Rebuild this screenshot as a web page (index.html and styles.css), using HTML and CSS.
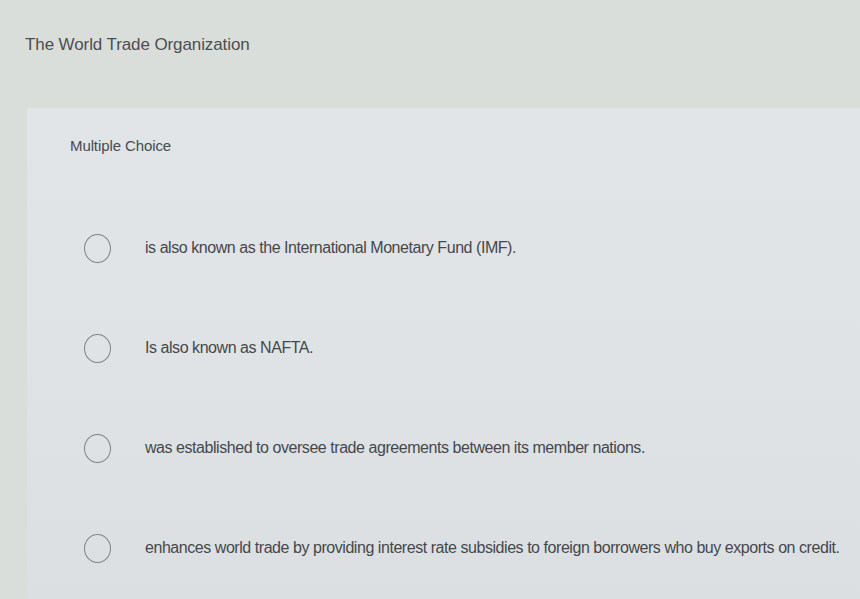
FILE: index.html
```html
<!DOCTYPE html>
<html lang="en">
<head>
    <meta charset="UTF-8">
    <meta name="viewport" content="width=device-width, initial-scale=1.0">
    <title>The World Trade Organization</title>
    <link rel="stylesheet" href="styles.css">
</head>
<body>
    <div class="header">
        <div class="question">The World Trade Organization</div>
    </div>
    <div class="panel">
        <div class="kind">Multiple Choice</div>
        <div class="options">
            <label class="option">
                <span class="radio"></span>
                <span class="answer">is also known as the International Monetary Fund (IMF).</span>
            </label>
            <label class="option">
                <span class="radio"></span>
                <span class="answer">Is also known as NAFTA.</span>
            </label>
            <label class="option">
                <span class="radio"></span>
                <span class="answer">was established to oversee trade agreements between its member nations.</span>
            </label>
            <label class="option">
                <span class="radio"></span>
                <span class="answer">enhances world trade by providing interest rate subsidies to foreign borrowers who buy exports on credit.</span>
            </label>
        </div>
    </div>
</body>
</html>
```

FILE: styles.css
```css
body {
    font-family: "Liberation Sans", Arial, sans-serif;
    background-color: #dadedb; /* Page grey */
    color: #45484b;
    margin: 0;
    padding: 0;
    height: 599px;
    overflow: hidden;
}
.header {
    height: 108px;
    padding-left: 25px;
    display: flex;
    align-items: flex-start;
}
.question {
    margin-top: 35px;
    font-size: 17px;
    letter-spacing: -0.1px;
    color: #4b4e51;
}
.panel {
    margin-left: 27px;
    height: 491px;
    background: linear-gradient(180deg, #e1e5e8 0%, #dfe3e6 50%, #dcdfe2 100%);
}
.kind {
    padding: 29px 0 0 43px;
    height: 60px;
    box-sizing: border-box;
    font-size: 15px;
    letter-spacing: -0.1px;
    color: #484b4e;
}
.options {
    padding-top: 30px;
    display: flex;
    flex-direction: column;
}
.option {
    height: 100px;
    display: flex;
    align-items: center;
    padding-left: 57px;
}
.radio {
    width: 25px;
    height: 27px;
    border: 1.5px solid #808386;
    border-radius: 50%;
    flex-shrink: 0;
}
.answer {
    margin-left: 34px;
    font-size: 16px;
    letter-spacing: -0.45px;
    white-space: nowrap;
}
```
